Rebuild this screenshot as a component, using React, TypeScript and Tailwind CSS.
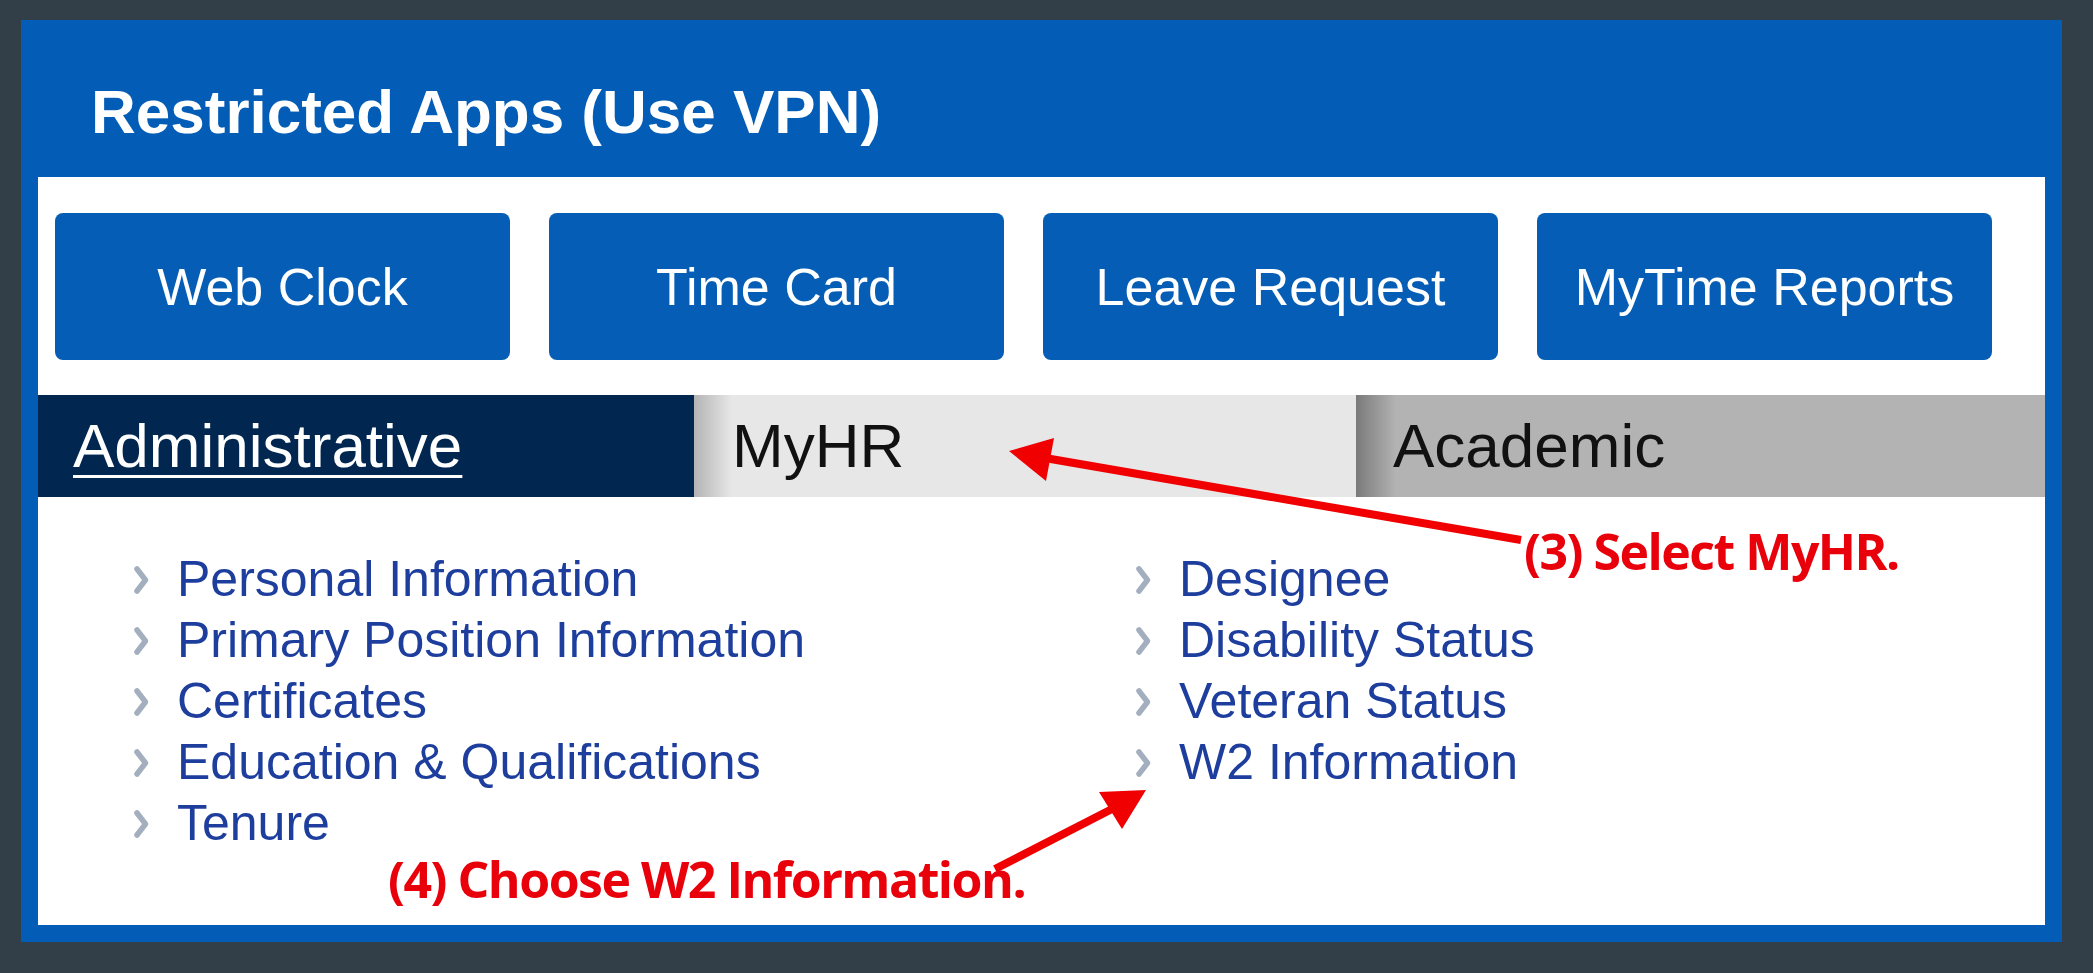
import React from 'react';

const apps = ['Web Clock', 'Time Card', 'Leave Request', 'MyTime Reports'];

const leftLinks = [
  'Personal Information',
  'Primary Position Information',
  'Certificates',
  'Education & Qualifications',
  'Tenure',
];

const rightLinks = ['Designee', 'Disability Status', 'Veteran Status', 'W2 Information'];

function Chevron() {
  return (
    <svg className="w-[44px] h-[30px] flex-shrink-0" viewBox="0 0 44 30" fill="none">
      <path
        d="M4 4 L12.5 15 L4 26"
        stroke="#a3afbe"
        strokeWidth={5.5}
        strokeLinecap="round"
        strokeLinejoin="round"
      />
    </svg>
  );
}

function LinkList({ items }: { items: string[] }) {
  return (
    <ul className="flex flex-col">
      {items.map((item) => (
        <li key={item} className="flex items-center h-[61px]">
          <Chevron />
          <span className="text-[50px] leading-[61px] text-[#1e3e9e] whitespace-nowrap">{item}</span>
        </li>
      ))}
    </ul>
  );
}

export default function App() {
  return (
    <div
      className="relative w-[2093px] h-[973px] bg-[#323e48] pt-[20px] pl-[21px] overflow-hidden"
      style={{ fontFamily: '"Liberation Sans", Arial, sans-serif' }}
    >
      {/* Panel */}
      <div className="w-[2041px] h-[922px] bg-[#035db6] flex flex-col px-[17px] pb-[17px]">
        {/* Header */}
        <div className="h-[157px] flex-shrink-0 pt-[61px] pl-[53px]">
          <h1 className="text-[62px] leading-none font-bold text-white">Restricted Apps (Use VPN)</h1>
        </div>

        {/* Body */}
        <div className="flex-1 bg-white flex flex-col">
          {/* App buttons */}
          <div className="flex gap-[39px] pt-[36px] pl-[17px]">
            {apps.map((app) => (
              <button
                key={app}
                className="w-[455px] h-[147px] rounded-[8px] bg-[#065db5] text-white text-[52px] leading-none flex items-center justify-center"
              >
                {app}
              </button>
            ))}
          </div>

          {/* Tabs */}
          <div className="flex h-[102px] mt-[35px]">
            <div className="w-[656px] bg-[#012751] flex items-center pl-[35px]">
              <span className="text-[62px] leading-none text-white underline decoration-[3px] underline-offset-[8px]">
                Administrative
              </span>
            </div>
            <div className="w-[662px] bg-[linear-gradient(to_right,#b4b4b4,#e7e7e7_38px)] flex items-center pl-[38px]">
              <span className="text-[62px] leading-none text-[#111]">MyHR</span>
            </div>
            <div className="flex-1 bg-[linear-gradient(to_right,#7a7a7a,#b3b3b3_40px)] flex items-center pl-[37px]">
              <span className="text-[62px] leading-none text-[#111]">Academic</span>
            </div>
          </div>

          {/* Links */}
          <div className="flex pt-[52px] pl-[95px]">
            <div className="w-[1002px]">
              <LinkList items={leftLinks} />
            </div>
            <div>
              <LinkList items={rightLinks} />
            </div>
          </div>
        </div>
      </div>

      {/* Annotations */}
      <svg className="absolute left-0 top-0 w-[2093px] h-[973px] pointer-events-none" viewBox="0 0 2093 973">
        <line x1="1521" y1="540" x2="1045" y2="458" stroke="#f00000" strokeWidth={8} />
        <polygon points="1009,451 1054,438 1046,481" fill="#f00000" />
        <line x1="995" y1="869" x2="1112" y2="809" stroke="#f00000" strokeWidth={8} />
        <polygon points="1146,790 1099,792 1122,829" fill="#f00000" />
      </svg>
      <div
        className="absolute left-[1524px] top-[526px] text-[50px] leading-none font-bold tracking-[-1.5px] text-[#e8000b] whitespace-nowrap"
        style={{ fontFamily: '"Open Sans", sans-serif' }}
      >
        (3) Select MyHR.
      </div>
      <div
        className="absolute left-[388px] top-[854px] text-[50px] leading-none font-bold tracking-[-1.5px] text-[#e8000b] whitespace-nowrap"
        style={{ fontFamily: '"Open Sans", sans-serif' }}
      >
        (4) Choose W2 Information.
      </div>
    </div>
  );
}
